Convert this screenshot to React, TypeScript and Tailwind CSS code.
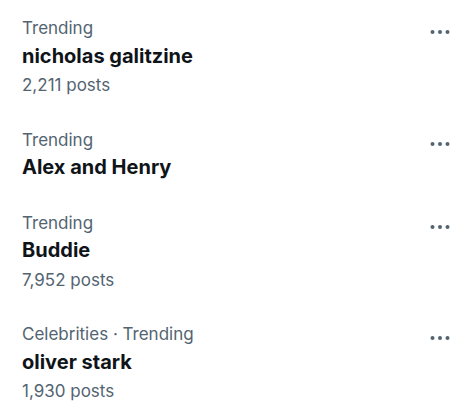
import React from 'react';

interface Trend {
  context: string;
  name: string;
  posts?: string;
}

const trends: Trend[] = [
  { context: 'Trending', name: 'nicholas galitzine', posts: '2,211 posts' },
  { context: 'Trending', name: 'Alex and Henry' },
  { context: 'Trending', name: 'Buddie', posts: '7,952 posts' },
  { context: 'Celebrities · Trending', name: 'oliver stark', posts: '1,930 posts' },
];

const MoreDots = () => (
  <svg width="20" height="6" viewBox="0 0 20 6" className="fill-[#536471]">
    <circle cx="2.5" cy="3" r="2" />
    <circle cx="10" cy="3" r="2" />
    <circle cx="17.5" cy="3" r="2" />
  </svg>
);

const TrendRow = ({ trend }: { trend: Trend }) => (
  <div className="flex justify-between py-[13px] pl-[22px] pr-[24px]">
    <div className="flex flex-col leading-[28.5px]">
      <span className="text-[17px] text-[#536471] pt-[2px] leading-[26.5px]">{trend.context}</span>
      <span className="text-[20px] font-bold text-[#0f1419]">{trend.name}</span>
      {trend.posts && <span className="text-[17px] text-[#536471] pt-[2px] leading-[26.5px]">{trend.posts}</span>}
    </div>
    <div className="pt-[16px]">
      <MoreDots />
    </div>
  </div>
);

export default function App() {
  return (
    <div className="w-[474px] h-[407px] bg-white overflow-hidden font-['Inter',sans-serif]">
      {trends.map((t) => (
        <TrendRow key={t.name} trend={t} />
      ))}
    </div>
  );
}
